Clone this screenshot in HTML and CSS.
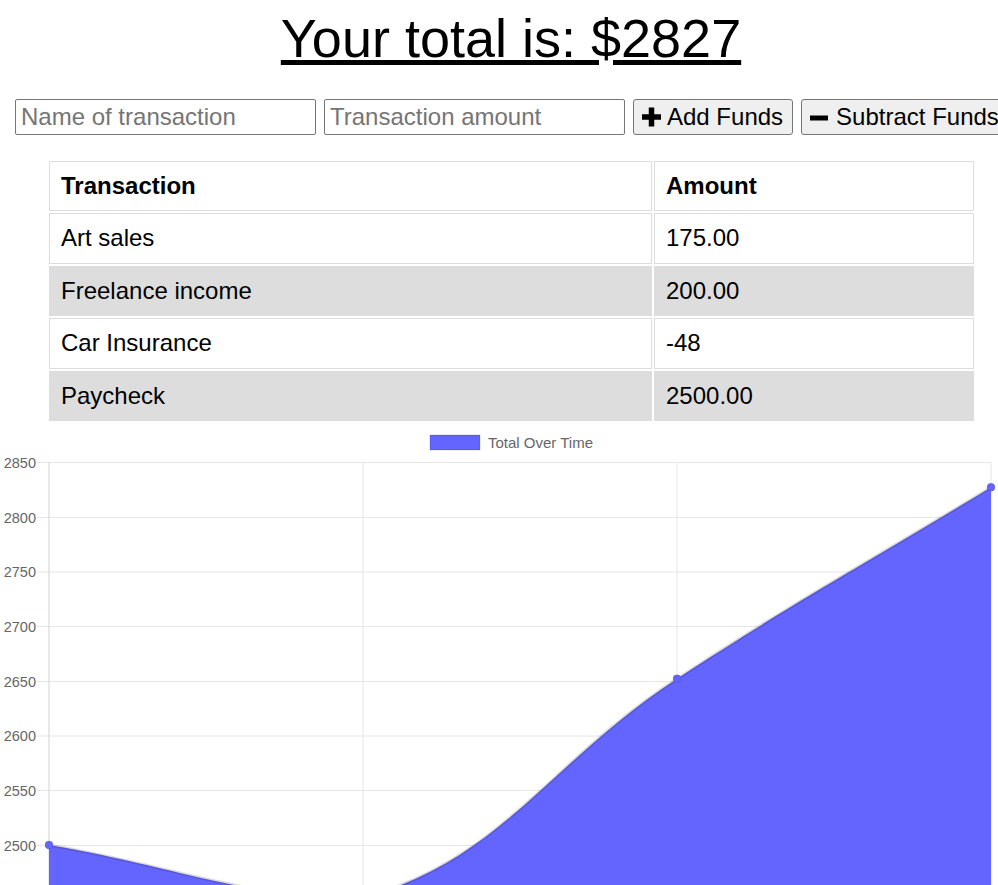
FILE: index.html
```
<!DOCTYPE html>
<html lang="en">
<head>
    <meta charset="UTF-8">
    <meta name="viewport" content="width=device-width, initial-scale=1.0">
    <title>Budget Tracker</title>
    <link rel="stylesheet" href="styles.css">
</head>
<body>
<div class="page">
    <h1 class="total">Your total is: $<span id="total">2827</span></h1>

    <div class="form">
        <input type="text" id="t-name" placeholder="Name of transaction">
        <input type="number" id="t-amount" placeholder="Transaction amount">
        <button id="add-btn" class="btn">
            <svg class="icon" width="19" height="20" viewBox="0 0 19 20"><path d="M9.5 0.5v19M0 10h19" stroke="#000" stroke-width="5.5"/></svg>
            Add Funds
        </button>
        <button id="sub-btn" class="btn">
            <svg class="icon" width="18" height="20" viewBox="0 0 18 20"><path d="M0 11h18" stroke="#000" stroke-width="5"/></svg>
            Subtract Funds
        </button>
    </div>

    <table class="transactions">
        <thead>
            <tr><th class="name-col">Transaction</th><th>Amount</th></tr>
        </thead>
        <tbody id="tbody">
            <tr><td>Art sales</td><td>175.00</td></tr>
            <tr><td>Freelance income</td><td>200.00</td></tr>
            <tr><td>Car Insurance</td><td>-48</td></tr>
            <tr><td>Paycheck</td><td>2500.00</td></tr>
        </tbody>
    </table>

    <!-- chart: y scale 2450..2850, 1.0943px per unit -->
    <svg class="chart" width="998" height="462" viewBox="0 423 998 462">
        <rect x="430" y="435" width="50" height="15" fill="#6464ff" stroke="rgba(0,0,0,0.1)" stroke-width="1.5"/>
        <text class="legend" x="488" y="447.5">Total Over Time</text>

        <g class="grid" stroke="#e6e6e6" stroke-width="1">
            <path d="M37 462.5H991M37 517.5H991M37 572H991M37 626.5H991M37 681.5H991M37 736H991M37 790.5H991M37 845.5H991M37 900H991"/>
            <path d="M363 462V910M677 462V910M991 462V910"/>
        </g>
        <path d="M49 462V910" stroke="#d2d2d2" stroke-width="1"/>

        <g class="ticks">
            <text x="36" y="467.5">2850</text>
            <text x="36" y="522.5">2800</text>
            <text x="36" y="577">2750</text>
            <text x="36" y="631.5">2700</text>
            <text x="36" y="686.5">2650</text>
            <text x="36" y="741">2600</text>
            <text x="36" y="795.5">2550</text>
            <text x="36" y="850.5">2500</text>
        </g>

        <path class="area" d="M49 900L49 845C174.6 866 248.9 899.8 363 897.5C500.1 861.2 548.9 762.4 677 678.7C800.1 598.3 865.4 563.9 991 487.2L991 900Z"/>
        <path class="line" d="M49 845C174.6 866 248.9 899.8 363 897.5C500.1 861.2 548.9 762.4 677 678.7C800.1 598.3 865.4 563.9 991 487.2"/>

        <g class="points">
            <circle cx="49" cy="845" r="4"/>
            <circle cx="363" cy="897.5" r="4"/>
            <circle cx="677" cy="678.7" r="4"/>
            <circle cx="991" cy="487.2" r="4"/>
        </g>
    </svg>
</div>
</body>
</html>
```

FILE: styles.css
```
html {
    overflow: hidden;
}
body {
    margin: 0;
    font-family: "Liberation Sans", Arial, sans-serif;
    color: #000;
    background: #fff;
}
.page {
    width: 998px;
    padding-top: 8px;
    overflow: hidden;
}
.total {
    margin: 0;
    padding-left: 24px;
    font-size: 54px;
    font-weight: normal;
    line-height: 60px;
    text-align: center;
    text-decoration: underline;
}
.form {
    display: flex;
    gap: 8px;
    margin-top: 31px;
    padding-left: 15px;
}
.form input {
    box-sizing: border-box;
    width: 301px;
    height: 36px;
    padding: 3px 5px;
    border: 1px solid #767676;
    border-radius: 2px;
    font-family: inherit;
    font-size: 24px;
    flex-shrink: 0;
}
.form input::placeholder {
    color: #757575;
}
.btn {
    display: inline-flex;
    align-items: center;
    gap: 6px;
    height: 36px;
    padding: 0 9px 0 8px;
    border: 1px solid #767676;
    border-radius: 3px;
    background: #efefef;
    font-family: inherit;
    font-size: 24px;
    color: #000;
    white-space: nowrap;
    flex-shrink: 0;
}
#sub-btn {
    gap: 8px;
}
.icon {
    display: block;
}
.transactions {
    width: 929px;
    margin: 24px 0 0 47px;
    border-collapse: separate;
    border-spacing: 2px;
    table-layout: fixed;
    font-size: 24px;
}
.transactions th,
.transactions td {
    box-sizing: border-box;
    border: 1px solid #ddd;
    padding: 11px;
    line-height: 26.4px;
    text-align: left;
}
.transactions .name-col {
    width: 603px;
}
.transactions tbody tr:nth-child(even) td {
    background: #ddd;
}
.chart {
    display: block;
}
.chart text {
    font-family: "Liberation Sans", Arial, sans-serif;
    font-size: 14.5px;
    fill: #666;
}
.chart .legend {
    font-size: 15px;
}
.ticks text {
    text-anchor: end;
}
.area {
    fill: #6464ff;
}
.line {
    fill: none;
    stroke: rgba(0, 0, 0, 0.14);
    stroke-width: 3;
}
.points circle {
    fill: #6464ff;
    stroke: rgba(0, 0, 0, 0.1);
    stroke-width: 1;
}
```
